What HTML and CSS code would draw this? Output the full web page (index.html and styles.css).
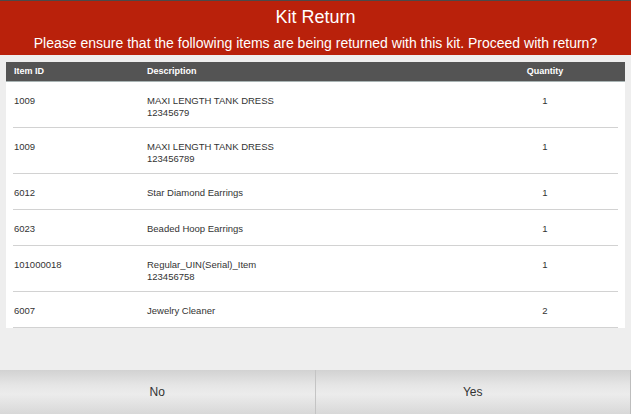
FILE: index.html
```html
<!DOCTYPE html>
<html>
<head>
<meta charset="utf-8">
<link rel="stylesheet" href="styles.css">
</head>
<body>
<div class="page">
  <div class="topstrip"></div>
  <header class="banner">
    <div class="title">Kit Return</div>
    <div class="subtitle">Please ensure that the following items are being returned with this kit. Proceed with return?</div>
  </header>
  <main class="content">
    <div class="table">
      <div class="thead">
        <div class="c1">Item ID</div>
        <div class="c2">Description</div>
        <div class="c3">Quantity</div>
      </div>
      <div class="row">
        <div class="c1">1009</div>
        <div class="c2">MAXI LENGTH TANK DRESS<br>12345679</div>
        <div class="c3">1</div>
      </div>
      <div class="row">
        <div class="c1">1009</div>
        <div class="c2">MAXI LENGTH TANK DRESS<br>123456789</div>
        <div class="c3">1</div>
      </div>
      <div class="row">
        <div class="c1">6012</div>
        <div class="c2">Star Diamond Earrings</div>
        <div class="c3">1</div>
      </div>
      <div class="row">
        <div class="c1">6023</div>
        <div class="c2">Beaded Hoop Earrings</div>
        <div class="c3">1</div>
      </div>
      <div class="row">
        <div class="c1">101000018</div>
        <div class="c2">Regular_UIN(Serial)_Item<br>123456758</div>
        <div class="c3">1</div>
      </div>
      <div class="row">
        <div class="c1">6007</div>
        <div class="c2">Jewelry Cleaner</div>
        <div class="c3">2</div>
      </div>
    </div>
  </main>
  <footer class="buttons">
    <button class="btn">No</button>
    <button class="btn">Yes</button>
  </footer>
</div>
</body>
</html>
```
FILE: styles.css
```css
html, body {
  margin: 0;
  padding: 0;
}
body {
  background: #eeeeee;
  font-family: "Liberation Sans", Arial, sans-serif;
  color: #333333;
}
.page {
  width: 631px;
  height: 414px;
  display: flex;
  flex-direction: column;
  overflow: hidden;
}
.topstrip {
  height: 1px;
  background: #4a4a4a;
}
.banner {
  background: #b9210b;
  color: #ffffff;
  text-align: center;
  padding: 5px 0 3px;
  height: 46px;
}
.title {
  font-size: 18px;
  line-height: 22px;
}
.subtitle {
  font-size: 14px;
  line-height: 18px;
  margin-top: 6px;
}
.content {
  flex: 1;
  padding: 7px 6px 0;
}
.table {
  background: #ffffff;
}
.thead {
  display: grid;
  grid-template-columns: 133px 1fr 146px;
  background: #545454;
  color: #ffffff;
  font-size: 9px;
  font-weight: bold;
  height: 19px;
  line-height: 19px;
  padding: 0 7px;
  border-bottom: 1px solid #a9b4b4;
}
.row {
  display: grid;
  grid-template-columns: 133px 1fr 146px;
  align-items: start;
  margin: 0 7px;
  font-size: 9.5px;
  line-height: 12px;
  padding: 13px 0 10px;
  border-bottom: 1px solid #d2d2d2;
}
.c1, .c2 {
  padding-left: 1px;
}
.row .c2 {
  margin-bottom: -2px;
}
.c3 {
  text-align: center;
}
.buttons {
  height: 44px;
  display: flex;
  border-right: 1px solid #bdbdbd;
}
.btn {
  flex: 1;
  margin: 0;
  border: none;
  background: linear-gradient(#d2d2d2 0%, #e6e6e6 35%, #ececec 55%, #d8d8d8 100%);
  font-family: "Liberation Sans", Arial, sans-serif;
  font-size: 12px;
  color: #333333;
  padding: 0;
}
.btn + .btn {
  border-left: 1px solid #c4c4c4;
}
```
